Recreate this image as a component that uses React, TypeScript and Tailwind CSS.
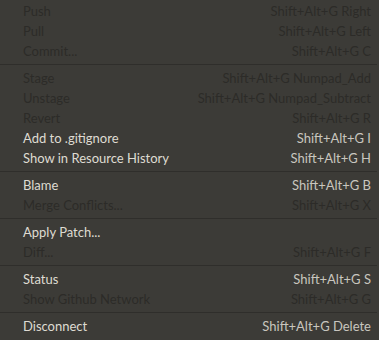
import React from 'react';

type Item = { label: string; shortcut: string; enabled: boolean } | 'sep';

const ITEMS: Item[] = [
  { label: 'Push', shortcut: 'Shift+Alt+G Right', enabled: false },
  { label: 'Pull', shortcut: 'Shift+Alt+G Left', enabled: false },
  { label: 'Commit...', shortcut: 'Shift+Alt+G C', enabled: false },
  'sep',
  { label: 'Stage', shortcut: 'Shift+Alt+G Numpad_Add', enabled: false },
  { label: 'Unstage', shortcut: 'Shift+Alt+G Numpad_Subtract', enabled: false },
  { label: 'Revert', shortcut: 'Shift+Alt+G R', enabled: false },
  { label: 'Add to .gitignore', shortcut: 'Shift+Alt+G I', enabled: true },
  { label: 'Show in Resource History', shortcut: 'Shift+Alt+G H', enabled: true },
  'sep',
  { label: 'Blame', shortcut: 'Shift+Alt+G B', enabled: true },
  { label: 'Merge Conflicts...', shortcut: 'Shift+Alt+G X', enabled: false },
  'sep',
  { label: 'Apply Patch...', shortcut: '', enabled: true },
  { label: 'Diff...', shortcut: 'Shift+Alt+G F', enabled: false },
  'sep',
  { label: 'Status', shortcut: 'Shift+Alt+G S', enabled: true },
  { label: 'Show Github Network', shortcut: 'Shift+Alt+G G', enabled: false },
  'sep',
  { label: 'Disconnect', shortcut: 'Shift+Alt+G Delete', enabled: true },
];

export default function App() {
  return (
    <div
      className="w-[379px] h-[340px] bg-[#3c3b37] pt-px overflow-hidden text-[13px]"
      style={{ fontFamily: 'Lato, "Open Sans", sans-serif' }}
    >
      {ITEMS.map((item, i) =>
        item === 'sep' ? (
          <div key={i} className="h-[7px] flex items-center pr-[2px]">
            <div className="h-px w-full bg-[#2f2e2b]" />
          </div>
        ) : (
          <div key={i} className="h-5 flex items-center justify-between pl-[23px] pr-[8px] leading-none">
            <span className={item.enabled ? 'text-[#dfdbd2]' : 'text-[#2c2b28]'}>{item.label}</span>
            <span className={item.enabled ? 'text-[#c9c6bf]' : 'text-[#2c2b28]'}>{item.shortcut}</span>
          </div>
        )
      )}
    </div>
  );
}
